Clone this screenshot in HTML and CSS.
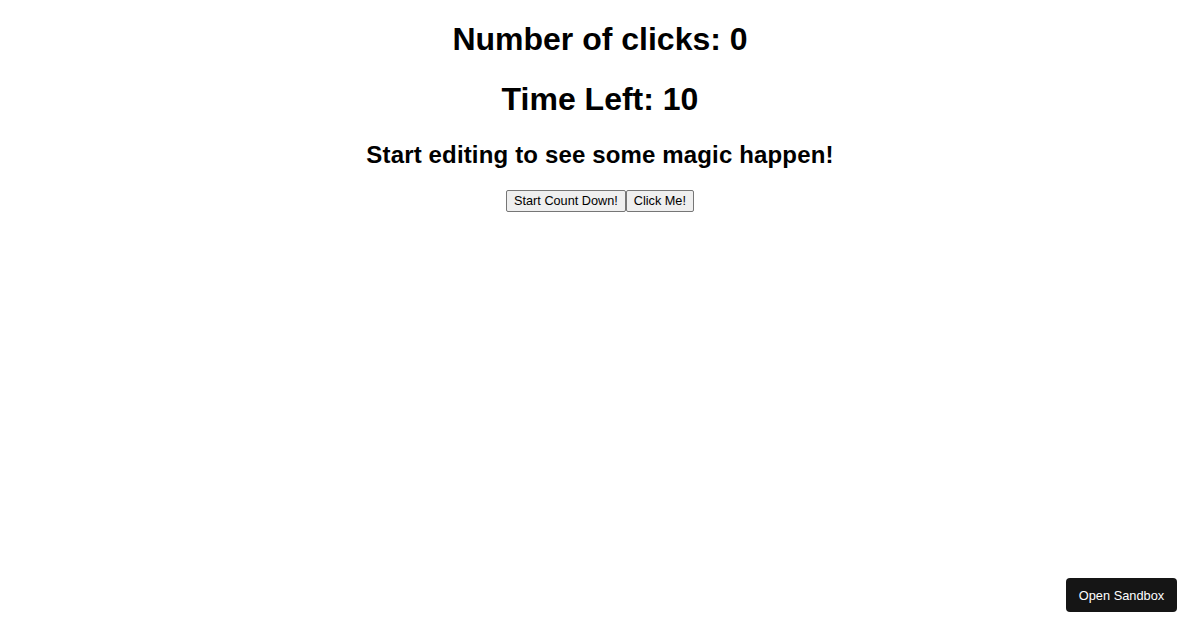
FILE: index.html
```html
<!DOCTYPE html>
<html>
<head>
<meta charset="utf-8">
<link rel="stylesheet" href="styles.css">
</head>
<body>
<div class="app">
  <h1 class="title first">Number of clicks: 0</h1>
  <h1 class="title">Time Left: 10</h1>
  <h2 class="subtitle">Start editing to see some magic happen!</h2>
  <div class="actions"><button class="btn">Start Count Down!</button><button class="btn">Click Me!</button></div>
</div>
<a class="open-sandbox">Open Sandbox</a>
</body>
</html>
```
FILE: styles.css
```css
body {
  margin: 0;
  background: #fff;
  font-family: "Liberation Sans", Arial, sans-serif;
}
.app {
  text-align: center;
  font-family: "Liberation Sans", Arial, sans-serif;
  color: #000;
}
.title {
  font-size: 32px;
  font-weight: bold;
  line-height: 37px;
  margin: 22.5px 0;
}
.title.first {
  margin-top: 21px;
}
.subtitle {
  font-size: 24px;
  font-weight: bold;
  line-height: 29px;
  margin: 20.5px 0;
  letter-spacing: 0.15px;
}
.actions {
  display: flex;
  justify-content: center;
}
.btn {
  font-family: "Liberation Sans", Arial, sans-serif;
  font-size: 12.7px;
  color: #000;
  height: 22px;
  box-sizing: border-box;
  padding: 1px 7px;
  border: 1px solid #767676;
  border-radius: 2px;
  background: #efefef;
  margin: 0;
}
.open-sandbox {
  position: fixed;
  right: 23px;
  bottom: 18px;
  width: 111px;
  height: 34px;
  box-sizing: border-box;
  display: flex;
  align-items: center;
  justify-content: center;
  background: #151515;
  color: #fff;
  border-radius: 4px;
  font-family: "Liberation Sans", Arial, sans-serif;
  font-size: 12.8px;
  text-decoration: none;
}
```
